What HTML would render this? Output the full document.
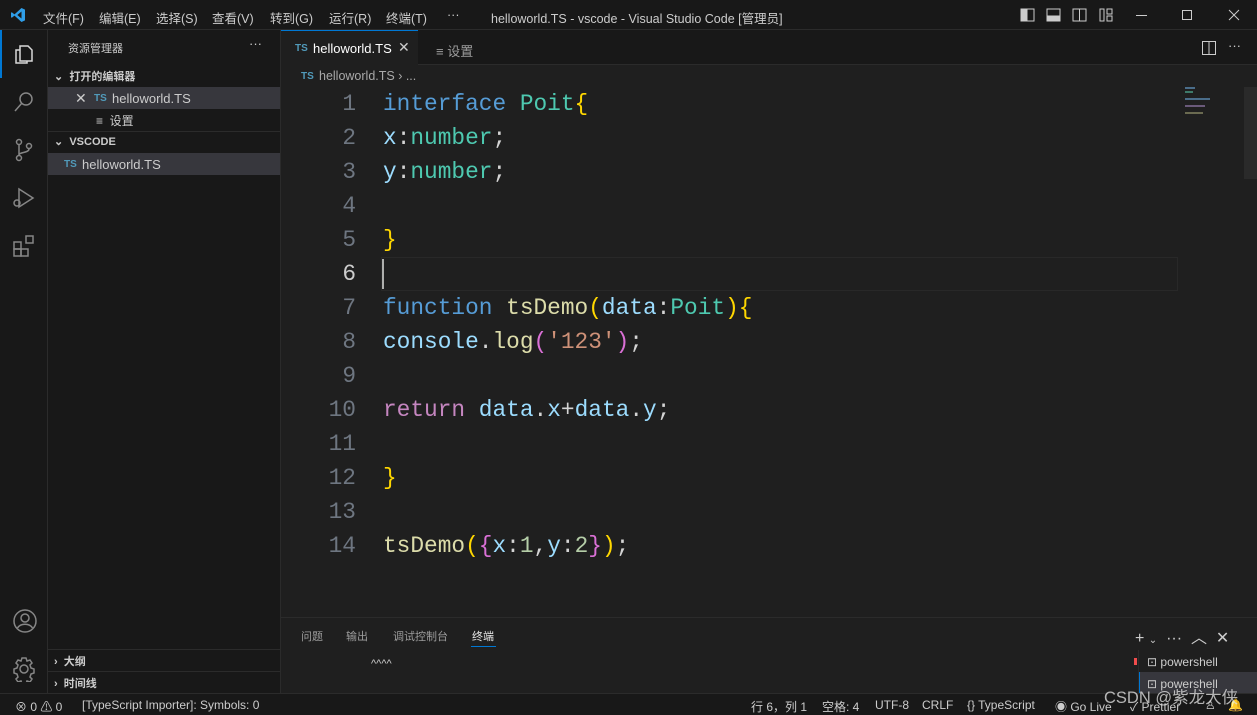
<!DOCTYPE html>
<html><head><meta charset="utf-8"><style>
*{margin:0;padding:0;box-sizing:border-box}
body{width:1257px;height:715px;overflow:hidden;background:#1f1f1f;font-family:"Liberation Sans","Noto Sans CJK SC",sans-serif;color:#ccc;font-size:13px;position:relative}
.a{position:absolute}
.t{white-space:nowrap}
#title{left:0;top:0;width:1257px;height:30px;background:#181818;border-bottom:1px solid #2b2b2b}
#act{left:0;top:30px;width:48px;height:663px;background:#181818;border-right:1px solid #2b2b2b}
#side{left:48px;top:30px;width:233px;height:663px;background:#181818;border-right:1px solid #2b2b2b}
#status{left:0;top:693px;width:1257px;height:22px;background:#181818;border-top:1px solid #2b2b2b;font-size:12px}
#status .a{top:4px;color:#ccc;white-space:nowrap}
.code{font-family:"Liberation Mono","DejaVu Sans Mono",monospace;font-size:22.8px;line-height:34px}
.ln{color:#6e7681;text-align:right;width:75px;left:281px}
.kw{color:#569cd6}.ty{color:#4ec9b0}.br{color:#ffd700}.pu{color:#da70d6}.v{color:#9cdcfe}.fn{color:#dcdcaa}.st{color:#ce9178}.rt{color:#c586c0}.nu{color:#b5cea8}
.ts{color:#519aba;font-weight:bold;font-size:10px}
.m{top:8px;font-size:12.5px;color:#ccc;white-space:nowrap}
.pt{top:628px;font-size:11px;color:#9d9d9d;white-space:nowrap}
</style></head><body>
<div id="title" class="a">
<svg class="a" style="left:10px;top:7px" width="16" height="16" viewBox="0 0 16 16"><path d="M11.5 1 L15 2.6 V13.4 L11.5 15 L4.5 8.6 L1.8 10.7 L1 10.2 V5.8 L1.8 5.3 L4.5 7.4 Z M11.5 4.5 L7.3 8 L11.5 11.5 Z" fill="#2f9ee8"/></svg>
<div class="a m" style="left:43px">文件(F)</div>
<div class="a m" style="left:99px">编辑(E)</div>
<div class="a m" style="left:156px">选择(S)</div>
<div class="a m" style="left:212px">查看(V)</div>
<div class="a m" style="left:270px">转到(G)</div>
<div class="a m" style="left:329px">运行(R)</div>
<div class="a m" style="left:386px">终端(T)</div>
<div class="a m" style="left:447px">···</div>
<div class="a m" style="left:491px">helloworld.TS - vscode - Visual Studio Code [管理员]</div>
<svg class="a" style="left:1020px;top:8px" width="100" height="14" viewBox="0 0 100 14" fill="none" stroke="#ccc"><rect x="1" y="1" width="13" height="12"/><rect x="1" y="1" width="6" height="12" fill="#ccc"/><rect x="27" y="1" width="13" height="12"/><rect x="27" y="8" width="13" height="5" fill="#ccc"/><rect x="53" y="1" width="13" height="12"/><line x1="59.5" y1="1" x2="59.5" y2="13"/><rect x="80" y="1" width="4" height="12"/><rect x="87" y="1" width="5" height="5"/><rect x="87" y="8" width="5" height="5"/></svg>
<div class="a" style="left:1136px;top:15px;width:11px;height:1px;background:#ccc"></div>
<div class="a" style="left:1182px;top:10px;width:10px;height:10px;border:1px solid #ccc"></div>
<svg class="a" style="left:1228px;top:9px" width="12" height="12"><path d="M1 1L11 11M11 1L1 11" stroke="#ccc"/></svg>
</div>
<div id="act" class="a">
<div class="a" style="left:0;top:0;width:2px;height:48px;background:#0078d4"></div>
<svg class="a" style="left:12px;top:12px" width="24" height="24" fill="none" stroke="#d7d7d7" stroke-width="1.5"><path d="M8 4h8l4 4v11H8z"/><path d="M8 8H4v13h11v-2"/></svg>
<svg class="a" style="left:12px;top:60px" width="24" height="24" fill="none" stroke="#868686" stroke-width="1.5"><circle cx="14" cy="9" r="6"/><path d="M10 13L3 21"/></svg>
<svg class="a" style="left:12px;top:108px" width="24" height="24" fill="none" stroke="#868686" stroke-width="1.5"><circle cx="7" cy="4" r="2.5"/><circle cx="7" cy="20" r="2.5"/><circle cx="17" cy="8" r="2.5"/><path d="M7 7v10M17 11c0 4-10 3-10 6"/></svg>
<svg class="a" style="left:12px;top:156px" width="24" height="24" fill="none" stroke="#868686" stroke-width="1.5"><path d="M7 3l14 9-14 9z"/><circle cx="5" cy="17" r="3"/></svg>
<svg class="a" style="left:12px;top:204px" width="24" height="24" fill="none" stroke="#868686" stroke-width="1.5"><rect x="2" y="8" width="7" height="7"/><rect x="2" y="15" width="7" height="7"/><rect x="9" y="15" width="7" height="7"/><rect x="14" y="2" width="7" height="7"/></svg>
<svg class="a" style="left:12px;top:578px" width="26" height="26" fill="none" stroke="#868686" stroke-width="1.5"><circle cx="13" cy="13" r="11"/><circle cx="13" cy="10" r="4"/><path d="M5.5 20c3-5 12-5 15 0"/></svg>
<svg class="a" style="left:11px;top:626px" width="26" height="26" fill="none" stroke="#868686" stroke-width="1.5"><circle cx="13" cy="13" r="4"/><path d="M11 2h4l1 3 3-1 2 3-2 2 1 3 3 1v4l-3 1-1 3 2 2-2 3-3-1-1 3h-4l-1-3-3 1-2-3 2-2-1-3-3-1v-4l3-1 1-3-2-2 2-3 3 1z"/></svg>
</div>
<div id="side" class="a">
<div class="a t" style="left:20px;top:10px;font-size:11px;color:#ccc">资源管理器</div>
<div class="a t" style="left:201px;top:6px;color:#ccc">···</div>
<div class="a t" style="left:6px;top:38px;font-size:11px;font-weight:bold;color:#ccc">⌄&nbsp;&nbsp;打开的编辑器</div>
<div class="a" style="left:0;top:57px;width:232px;height:22px;background:#37373d"></div>
<div class="a t" style="left:27px;top:60px;color:#ccc;font-size:14px">✕</div>
<div class="a t ts" style="left:46px;top:63px">TS</div>
<div class="a t" style="left:64px;top:61px;font-size:13px;color:#ccc">helloworld.TS</div>
<div class="a t" style="left:48px;top:82px;font-size:12px;color:#ccc">≡&nbsp;&nbsp;设置</div>
<div class="a" style="left:0;top:101px;width:232px;height:1px;background:#2b2b2b"></div>
<div class="a t" style="left:6px;top:105px;font-size:11px;font-weight:bold;color:#ccc">⌄&nbsp;&nbsp;VSCODE</div>
<div class="a" style="left:0;top:123px;width:232px;height:22px;background:#37373d"></div>
<div class="a t ts" style="left:16px;top:129px">TS</div>
<div class="a t" style="left:34px;top:127px;font-size:13px;color:#ccc">helloworld.TS</div>
<div class="a" style="left:0;top:619px;width:232px;height:1px;background:#2b2b2b"></div>
<div class="a t" style="left:6px;top:623px;font-size:11px;font-weight:bold;color:#ccc">›&nbsp;&nbsp;大纲</div>
<div class="a" style="left:0;top:641px;width:232px;height:1px;background:#2b2b2b"></div>
<div class="a t" style="left:6px;top:645px;font-size:11px;font-weight:bold;color:#ccc">›&nbsp;&nbsp;时间线</div>
</div>
<div class="a" style="left:281px;top:30px;width:976px;height:35px;background:#181818;border-bottom:1px solid #2b2b2b"></div>
<div class="a" style="left:281px;top:30px;width:137px;height:35px;background:#1f1f1f;border-top:1px solid #0078d4"></div>
<div class="a t ts" style="left:295px;top:43px">TS</div>
<div class="a t" style="left:313px;top:41px;color:#fff">helloworld.TS</div>
<div class="a t" style="left:398px;top:39px;color:#ccc;font-size:14px">✕</div>
<div class="a t" style="left:436px;top:41px;color:#9d9d9d">≡ 设置</div>
<svg class="a" style="left:1202px;top:41px" width="14" height="14" fill="none" stroke="#ccc"><rect x="0.5" y="0.5" width="13" height="13"/><line x1="7" y1="0" x2="7" y2="14"/></svg>
<div class="a t" style="left:1228px;top:38px;color:#ccc">···</div>
<div class="a t ts" style="left:301px;top:71px">TS</div>
<div class="a t" style="left:319px;top:69px;color:#a9a9a9;font-size:12.5px">helloworld.TS › ...</div>
<div class="a" style="left:381px;top:257px;width:797px;height:34px;border:1px solid #282828"></div>
<div class="a" style="left:382px;top:259px;width:2px;height:30px;background:#aeafad"></div>
<div class="a code ln" style="top:87px">1<br>2<br>3<br>4<br>5<br><span style="color:#ccc">6</span><br>7<br>8<br>9<br>10<br>11<br>12<br>13<br>14</div>
<div class="a code t" style="left:383px;top:87px;color:#d4d4d4">
<span class="kw">interface</span> <span class="ty">Poit</span><span class="br">{</span><br>
<span class="v">x</span>:<span class="ty">number</span>;<br>
<span class="v">y</span>:<span class="ty">number</span>;<br>
&nbsp;<br>
<span class="br">}</span><br>
&nbsp;<br>
<span class="kw">function</span> <span class="fn">tsDemo</span><span class="br">(</span><span class="v">data</span>:<span class="ty">Poit</span><span class="br">){</span><br>
<span class="v">console</span>.<span class="fn">log</span><span class="pu">(</span><span class="st">'123'</span><span class="pu">)</span>;<br>
&nbsp;<br>
<span class="rt">return</span> <span class="v">data</span>.<span class="v">x</span>+<span class="v">data</span>.<span class="v">y</span>;<br>
&nbsp;<br>
<span class="br">}</span><br>
&nbsp;<br>
<span class="fn">tsDemo</span><span class="br">(</span><span class="pu">{</span><span class="v">x</span>:<span class="nu">1</span>,<span class="v">y</span>:<span class="nu">2</span><span class="pu">}</span><span class="br">)</span>;</div>
<div class="a" style="left:1185px;top:87px;width:10px;height:2px;background:#4a6d8a"></div>
<div class="a" style="left:1185px;top:91px;width:8px;height:2px;background:#3e7a6a"></div>
<div class="a" style="left:1185px;top:98px;width:25px;height:2px;background:#4a6d8a"></div>
<div class="a" style="left:1185px;top:105px;width:20px;height:2px;background:#6a5a7a"></div>
<div class="a" style="left:1185px;top:112px;width:18px;height:2px;background:#6a6a50"></div>
<div class="a" style="left:1244px;top:87px;width:13px;height:92px;background:#2a2a2a"></div>
<div class="a" style="left:281px;top:617px;width:976px;height:1px;background:#2b2b2b"></div>
<div class="a pt" style="left:301px">问题</div>
<div class="a pt" style="left:346px">输出</div>
<div class="a pt" style="left:393px">调试控制台</div>
<div class="a pt" style="left:472px;color:#e7e7e7">终端</div>
<div class="a" style="left:471px;top:646px;width:25px;height:1px;background:#0078d4"></div>
<div class="a t" style="left:371px;top:658px;font-size:11px;color:#ccc">^^^^</div>
<div class="a t" style="left:1135px;top:624px;font-size:16px;color:#ccc">+ <span style="font-size:10px">⌄</span>&nbsp;&nbsp;··· &nbsp;︿&nbsp;&nbsp;✕</div>
<div class="a" style="left:1138px;top:650px;width:119px;height:43px;border-left:1px solid #2b2b2b"></div>
<div class="a" style="left:1139px;top:672px;width:118px;height:21px;background:#37373d;border-left:1px solid #0078d4"></div>
<div class="a" style="left:1134px;top:658px;width:3px;height:7px;background:#f14c4c"></div>
<div class="a t" style="left:1147px;top:655px;font-size:12px;color:#ccc">⊡ powershell</div>
<div class="a t" style="left:1147px;top:677px;font-size:12px;color:#ccc">⊡ powershell</div>
<div id="status" class="a">
<div class="a" style="left:15px">⊗ 0 ⚠ 0</div>
<div class="a" style="left:82px">[TypeScript Importer]: Symbols: 0</div>
<div class="a" style="left:751px">行 6，列 1</div>
<div class="a" style="left:822px">空格: 4</div>
<div class="a" style="left:875px">UTF-8</div>
<div class="a" style="left:922px">CRLF</div>
<div class="a" style="left:967px">{} TypeScript</div>
<div class="a" style="left:1055px">◉ Go Live</div>
<div class="a" style="left:1130px">✓ Prettier</div>
<div class="a" style="left:1205px">♙</div>
<div class="a" style="left:1228px">🔔</div>
</div>
<div class="a t" style="left:1104px;top:684px;font-size:16.5px;color:rgba(220,220,220,0.8)">CSDN @紫龙大侠</div>
</body></html>
